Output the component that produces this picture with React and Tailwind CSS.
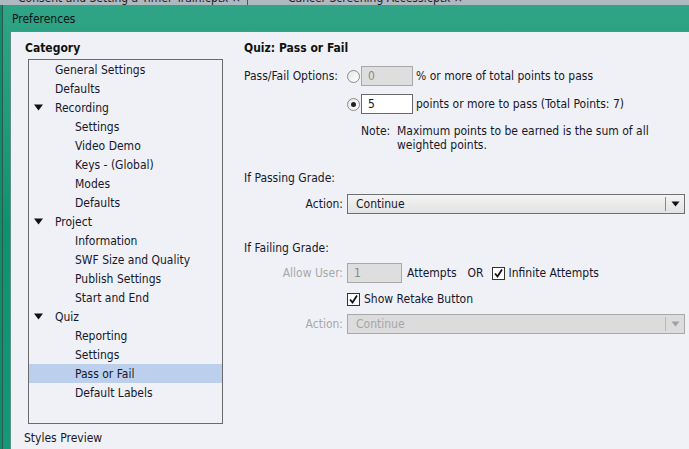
import React from "react";

const font = { fontFamily: "'DejaVu Sans Condensed', 'Liberation Sans', sans-serif" };

const tree = [
  { label: "General Settings", level: 1 },
  { label: "Defaults", level: 1 },
  { label: "Recording", level: 1, open: true },
  { label: "Settings", level: 2 },
  { label: "Video Demo", level: 2 },
  { label: "Keys - (Global)", level: 2 },
  { label: "Modes", level: 2 },
  { label: "Defaults", level: 2 },
  { label: "Project", level: 1, open: true },
  { label: "Information", level: 2 },
  { label: "SWF Size and Quality", level: 2 },
  { label: "Publish Settings", level: 2 },
  { label: "Start and End", level: 2 },
  { label: "Quiz", level: 1, open: true },
  { label: "Reporting", level: 2 },
  { label: "Settings", level: 2 },
  { label: "Pass or Fail", level: 2, selected: true },
  { label: "Default Labels", level: 2 },
];

function Radio({ checked }) {
  return (
    <span className="w-[13px] h-[13px] rounded-full border border-[#8a8a8a] bg-gradient-to-br from-[#e6e6e6] to-white flex items-center justify-center shrink-0">
      {checked && <span className="w-[5px] h-[5px] rounded-full bg-[#222]" />}
    </span>
  );
}

function Check() {
  return (
    <span className="w-[13px] h-[13px] border border-[#333] bg-white flex items-center justify-center shrink-0">
      <svg width="11" height="11" viewBox="0 0 11 11">
        <path d="M2 5.5 L4.5 8.5 L9 1.5" fill="none" stroke="#111" strokeWidth="1.8" />
      </svg>
    </span>
  );
}

function Select({ disabled }) {
  return (
    <div
      className={`w-[338px] h-[20px] border flex items-center ${
        disabled ? "border-[#a8a8a8] bg-[#dcdcdc] text-[#a6a6a6]" : "border-[#707070] bg-gradient-to-b from-[#f4f4f4] to-[#e2e2e2]"
      }`}
    >
      <span className="flex-1 pl-[8px]">Continue</span>
      <span className={`w-px h-[14px] ${disabled ? "bg-[#b8b8b8]" : "bg-[#8a8a8a]"}`} />
      <span className="w-[18px] flex justify-center">
        <svg width="9" height="6" viewBox="0 0 9 6">
          <path d="M0.5 0.5 H8.5 L4.5 5.5 Z" fill={disabled ? "#a0a0a0" : "#111"} />
        </svg>
      </span>
    </div>
  );
}

export default function App() {
  return (
    <div className="w-[689px] h-[449px] overflow-hidden bg-[#0f8d6c] text-[12px] text-[#17172a] flex flex-col" style={font}>
      {/* background tabs peeking */}
      <div className="h-[5px] overflow-hidden bg-[#aeb8c0] flex text-[12px] text-[#222] leading-[12px]">
        <span className="-mt-[8px] ml-[18px] w-[230px] whitespace-nowrap border-r border-[#555]">Consent and Setting a Timer Train.cptx ×</span>
        <span className="-mt-[8px] ml-[40px] whitespace-nowrap">Cancer Screening Access.cptx ×</span>
      </div>

      <div className="flex-1 flex flex-col ml-[2px] border-l border-[#2a5c4c] bg-gradient-to-b from-[#2fa486] via-[#0c9271] to-[#15977a]">
        {/* Title bar */}
        <div className="h-[26px] flex items-center pl-[9px] pt-[2px] text-[#111] text-[12px]">Preferences</div>

        {/* Client area */}
        <div className="flex-1 ml-[7px] border-t border-l border-[#5b8f80] bg-[#eff1f6] flex">
          {/* Left: category */}
          <div className="w-[218px] flex flex-col pl-[14px] pt-[8px]">
            <div className="font-bold h-[16px] leading-[16px] text-[#111]">Category</div>
            <div className="mt-[3px] ml-[3px] w-[195px] h-[365px] border border-[#6a6a6a]">
              {tree.map((item, i) => (
                <div
                  key={i}
                  className={`h-[19px] flex items-center ${item.selected ? "bg-[#bcd0ee]" : ""}`}
                  style={{ paddingLeft: item.level === 1 ? 4 : 46 }}
                >
                  {item.level === 1 && (
                    <span className="w-[22px] flex justify-start pl-[1px]">
                      {item.open && (
                        <svg width="9" height="7" viewBox="0 0 9 7">
                          <path d="M0 0.5 H9 L4.5 6.5 Z" fill="#111" />
                        </svg>
                      )}
                    </span>
                  )}
                  <span>{item.label}</span>
                </div>
              ))}
            </div>
            <div className="mt-[5px] -ml-[1px]">Styles Preview</div>
          </div>

          {/* Right: pass or fail */}
          <div className="flex-1 pl-[15px] pt-[8px] flex flex-col">
            <div className="font-bold h-[16px] leading-[16px] text-[#111]">Quiz: Pass or Fail</div>

            <div className="mt-[10px] flex">
              <div className="w-[103px] h-[20px] flex items-center">Pass/Fail Options:</div>
              <div className="flex flex-col">
                <div className="h-[20px] flex items-center">
                  <Radio />
                  <span className="ml-px w-[52px] h-[20px] border border-[#a8a8a8] bg-[#dedede] text-[#8a8a8a] flex items-center pl-[6px]">0</span>
                  <span className="ml-[3px]">% or more of total points to pass</span>
                </div>
                <div className="mt-[8px] h-[20px] flex items-center">
                  <Radio checked />
                  <span className="ml-px w-[52px] h-[20px] border border-[#6a6a6a] bg-white flex items-center pl-[6px]">5</span>
                  <span className="ml-[3px]">points or more to pass (Total Points: 7)</span>
                </div>
                <div className="mt-[10px] ml-[14px] flex leading-[14px]">
                  <span className="w-[36px]">Note:</span>
                  <span className="w-[270px]">Maximum points to be earned is the sum of all weighted points.</span>
                </div>
              </div>
            </div>

            <div className="mt-[18px] h-[16px] leading-[16px]">If Passing Grade:</div>
            <div className="mt-[8px] flex items-center">
              <div className="w-[103px] text-right pr-[4px]">Action:</div>
              <Select />
            </div>

            <div className="mt-[26px] h-[16px] leading-[16px]">If Failing Grade:</div>
            <div className="mt-[7px] h-[20px] flex items-center">
              <div className="w-[103px] text-right pr-[4px] text-[#a8a8a8]">Allow User:</div>
              <span className="w-[55px] h-[20px] border border-[#a8a8a8] bg-[#dedede] text-[#8a8a8a] flex items-center pl-[6px]">1</span>
              <span className="ml-[5px]">Attempts</span>
              <span className="ml-[11px]">OR</span>
              <span className="ml-[8px]"><Check /></span>
              <span className="ml-[4px]">Infinite Attempts</span>
            </div>
            <div className="mt-[9px] h-[14px] flex items-center pl-[103px]">
              <Check />
              <span className="ml-[4px]">Show Retake Button</span>
            </div>
            <div className="mt-[8px] flex items-center">
              <div className="w-[103px] text-right pr-[4px] text-[#a8a8a8]">Action:</div>
              <Select disabled />
            </div>
          </div>
        </div>
      </div>
    </div>
  );
}
